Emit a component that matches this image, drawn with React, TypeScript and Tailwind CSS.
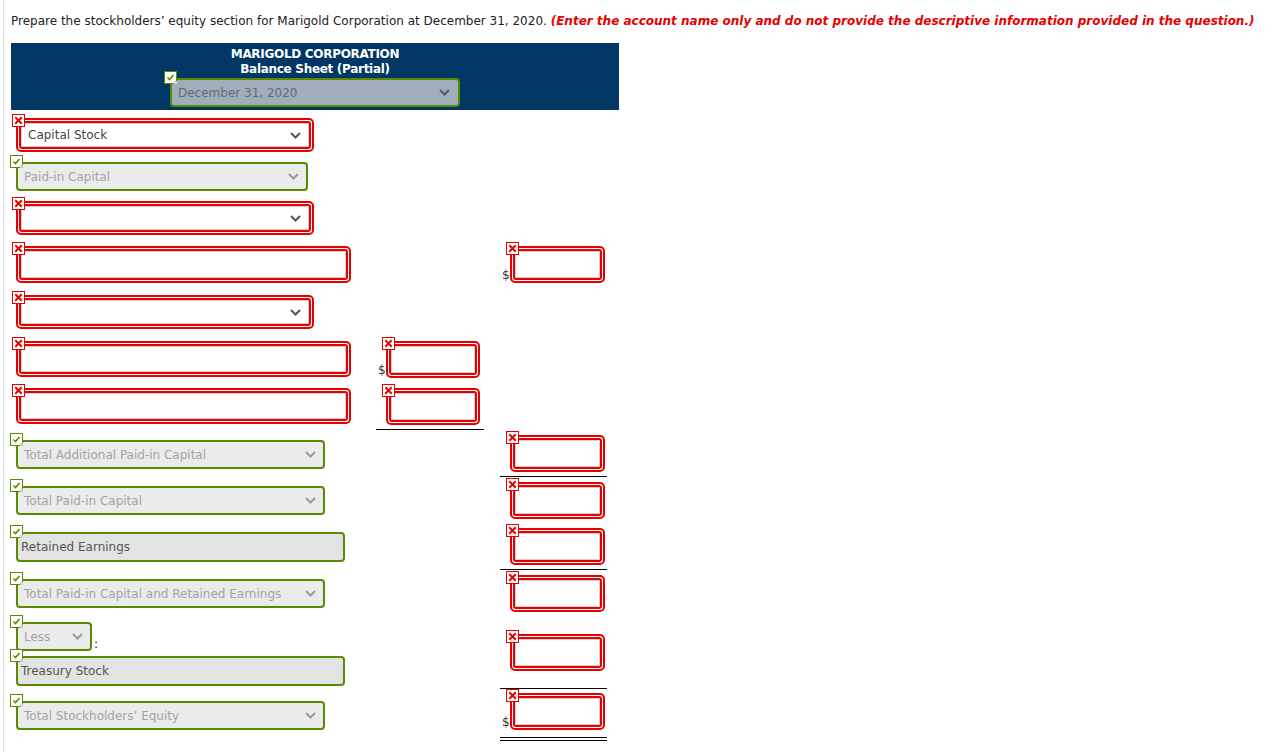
import React from 'react';

const RED = 'border-[#e60000]';

function XMark() {
  return (
    <span className="absolute -left-[4px] -top-[4px] z-10 flex h-[13px] w-[13px] items-center justify-center border border-[#e60000] bg-white">
      <svg width="9" height="9" viewBox="0 0 9 9" fill="none" stroke="#e60000" strokeWidth="2" strokeLinecap="square">
        <path d="M2 2l5 5M7 2l-5 5" />
      </svg>
    </span>
  );
}

function CheckMark({ className = '-left-[6px] -top-[7px]' }: { className?: string }) {
  return (
    <span className={`absolute ${className} z-10 flex h-[13px] w-[13px] items-center justify-center border border-[#5b8a00] bg-white`}>
      <svg width="9" height="9" viewBox="0 0 9 9" fill="none" stroke="#5b8a00" strokeWidth="1.6">
        <path d="M1.5 4.5l2 2 4-4.5" />
      </svg>
      <span className="absolute -bottom-[1px] -right-[1px] h-[3px] w-[3px] bg-[#d0d0d0]" />
    </span>
  );
}

function Chevron({ color = '#555' }: { color?: string }) {
  return (
    <svg width="11" height="7" viewBox="0 0 11 7" fill="none" stroke={color} strokeWidth="2">
      <path d="M1 1l4.5 4.5L10 1" />
    </svg>
  );
}

// red double frame used for wrong answers
function RedFrame({ w, h, children }: { w: number; h: number; children?: React.ReactNode }) {
  return (
    <div className="relative shrink-0" style={{ width: w, height: h }}>
      <XMark />
      <div className={`h-full rounded-[5px] border-2 ${RED} bg-white p-px`}>
        <div className={`h-full rounded-[3px] border-2 ${RED}`}>
          <div className="flex h-full items-center border border-[#cfcfcf] bg-white">{children}</div>
        </div>
      </div>
    </div>
  );
}

function RedSelect({ w = 298, text = '' }: { w?: number; text?: string }) {
  return (
    <RedFrame w={w} h={34}>
      <span className="flex-1 pl-[6px] text-[12px] text-[#444]">{text}</span>
      <span className="pr-[7px]">
        <Chevron />
      </span>
    </RedFrame>
  );
}

function GreenSelect({ w, text }: { w: number; text: string }) {
  return (
    <div className="relative" style={{ width: w }}>
      <CheckMark />
      <div className="flex h-[29px] items-center rounded-[4px] border-2 border-[#5b8a00] bg-[#ebebeb]">
        <span className="flex-1 truncate pl-[6px] text-[12px] text-[#a3a3a3]">{text}</span>
        <span className="pr-[7px]">
          <Chevron color="#9a9a9a" />
        </span>
      </div>
    </div>
  );
}

function GreenInput({ w, text }: { w: number; text: string }) {
  return (
    <div className="relative" style={{ width: w }}>
      <CheckMark />
      <div className="flex h-[30px] items-center rounded-[4px] border-2 border-[#5b8a00] bg-[#e3e3e3]">
        <span className="pl-[3px] text-[12px] text-[#555]">{text}</span>
      </div>
    </div>
  );
}

function Amount({ w, dollar }: { w: number; dollar?: boolean }) {
  return (
    <div className="flex items-end pl-[2px]">
      <span className="mb-[2px] w-[8px] shrink-0 text-[12px] leading-none text-[#333]">{dollar ? '$' : ''}</span>
      <RedFrame w={w} h={37} />
    </div>
  );
}

export default function App() {
  return (
    <div className="ml-[3px] min-h-screen border-l border-[#d6dce4] bg-white pl-[7px] font-['DejaVu_Sans',Verdana,sans-serif] text-[#222]">
      <p className="pt-[13px] text-[12px] leading-[16px]">
        Prepare the stockholders’ equity section for Marigold Corporation at December 31, 2020.{' '}
        <span className="font-bold italic text-[#e60000]">
          (Enter the account name only and do not provide the descriptive information provided in the question.)
        </span>
      </p>

      <div className="mt-[14px] flex h-[67px] w-[608px] flex-col items-center bg-[#003764] pt-[4px]">
        <div className="text-center text-[12px] font-bold leading-[15px] tracking-[-0.3px] text-white">
          MARIGOLD CORPORATION
          <br />
          Balance Sheet (Partial)
        </div>
        <div className="relative mt-[1px] w-[290px]">
          <CheckMark className="-left-[6px] -top-[7px]" />
          <div className="flex h-[29px] items-center rounded-[4px] border-2 border-[#5b8a00] bg-[#a0adba]">
            <span className="flex-1 pl-[6px] text-[12px] text-[#5f6b78]">December 31, 2020</span>
            <span className="pr-[8px]">
              <Chevron color="#4f5a66" />
            </span>
          </div>
        </div>
      </div>

      <div className="pl-[5px] pt-[3px]">
        {/* row 1 */}
        <div className="flex h-[42px] items-start">
          <div className="mt-[5px] w-[360px]">
            <RedSelect text="Capital Stock" />
          </div>
        </div>
        {/* row 2 */}
        <div className="flex h-[42px] items-start">
          <div className="mt-[7px] w-[360px]">
            <GreenSelect w={292} text="Paid-in Capital" />
          </div>
        </div>
        {/* row 3 */}
        <div className="flex h-[45px] items-start">
          <div className="mt-[4px] w-[360px]">
            <RedSelect />
          </div>
        </div>
        {/* row 4 */}
        <div className="flex h-[48px] items-start">
          <div className="mt-[4px] w-[360px]">
            <RedFrame w={335} h={37} />
          </div>
          <div className="w-[108px]" />
          <div className="ml-[16px] mt-[4px] w-[107px]">
            <Amount w={95} dollar />
          </div>
        </div>
        {/* row 5 */}
        <div className="flex h-[47px] items-start">
          <div className="mt-[5px] w-[360px]">
            <RedSelect />
          </div>
        </div>
        {/* row 6 */}
        <div className="flex h-[47px] items-start">
          <div className="mt-[4px] w-[360px]">
            <RedFrame w={335} h={36} />
          </div>
          <div className="mt-[4px] w-[108px]">
            <Amount w={94} dollar />
          </div>
        </div>
        {/* row 7 */}
        <div className="flex h-[47px] items-start">
          <div className="mt-[4px] w-[360px]">
            <RedFrame w={335} h={36} />
          </div>
          <div className="w-[108px] border-b border-black pb-[4px] pt-[4px]">
            <Amount w={94} />
          </div>
        </div>
        {/* row 8 */}
        <div className="flex h-[47px] items-start">
          <div className="mt-[9px] w-[360px]">
            <GreenSelect w={309} text="Total Additional Paid-in Capital" />
          </div>
          <div className="w-[108px]" />
          <div className="ml-[16px] w-[107px] border-b border-black pb-[4px] pt-[4px]">
            <Amount w={95} />
          </div>
        </div>
        {/* row 9 */}
        <div className="flex h-[46px] items-start">
          <div className="mt-[8px] w-[360px]">
            <GreenSelect w={309} text="Total Paid-in Capital" />
          </div>
          <div className="w-[108px]" />
          <div className="ml-[16px] mt-[4px] w-[107px]">
            <Amount w={95} />
          </div>
        </div>
        {/* row 10 */}
        <div className="flex h-[47px] items-start">
          <div className="mt-[8px] w-[360px]">
            <GreenInput w={329} text="Retained Earnings" />
          </div>
          <div className="w-[108px]" />
          <div className="ml-[16px] w-[107px] border-b border-black pb-[4px] pt-[4px]">
            <Amount w={95} />
          </div>
        </div>
        {/* row 11 */}
        <div className="flex h-[47px] items-start">
          <div className="mt-[8px] w-[360px]">
            <GreenSelect w={309} text="Total Paid-in Capital and Retained Earnings" />
          </div>
          <div className="w-[108px]" />
          <div className="ml-[16px] mt-[4px] w-[107px]">
            <Amount w={95} />
          </div>
        </div>
        {/* row 12 */}
        <div className="flex h-[72px] items-start">
          <div className="mt-[4px] w-[360px]">
            <div className="flex items-end">
              <GreenSelect w={76} text="Less" />
              <span className="ml-[2px] text-[12px] leading-[14px]">:</span>
            </div>
            <div className="mt-[5px]">
              <GreenInput w={329} text="Treasury Stock" />
            </div>
          </div>
          <div className="w-[108px]" />
          <div className="ml-[16px] w-[107px] border-b border-black pb-[17px] pt-[16px]">
            <Amount w={95} />
          </div>
        </div>
        {/* row 13 */}
        <div className="flex items-start">
          <div className="mt-[11px] w-[360px]">
            <GreenSelect w={309} text="Total Stockholders’ Equity" />
          </div>
          <div className="w-[108px]" />
          <div className="ml-[16px] w-[107px] border-b-[4px] border-double border-black pb-[7px] pt-[3px]">
            <Amount w={95} dollar />
          </div>
        </div>
      </div>
    </div>
  );
}
